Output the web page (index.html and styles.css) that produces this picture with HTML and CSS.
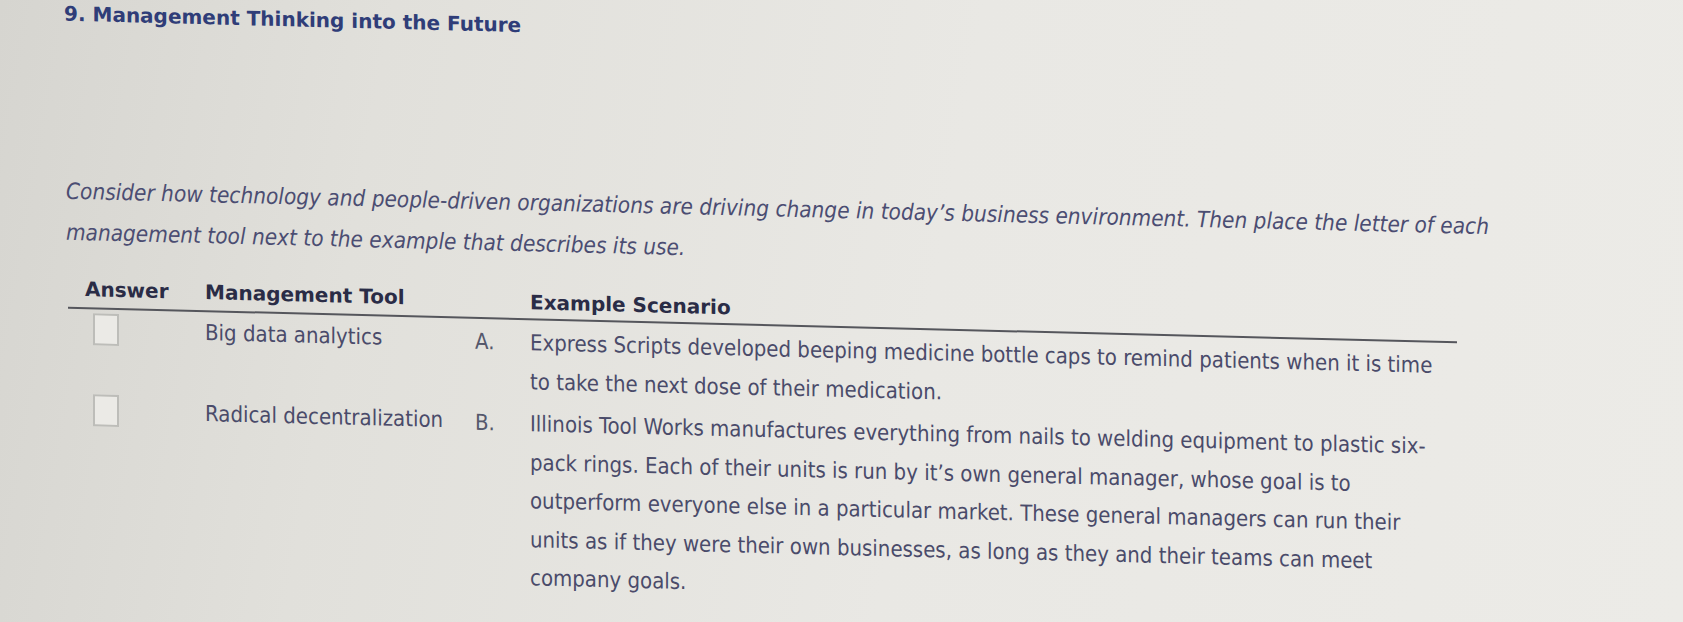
FILE: index.html
```html
<!DOCTYPE html>
<html lang="en">
<head>
<meta charset="utf-8">
<title>Management Thinking into the Future</title>
<link rel="stylesheet" href="styles.css">
</head>
<body>
<div class="page">
  <h1 class="title">9. Management Thinking into the Future</h1>
  <p class="prompt">Consider how technology and people-driven organizations are driving change in today’s business environment. Then place the letter of each management tool next to the example that describes its use.</p>
  <div class="match">
    <div class="head">
      <div class="c-answer">Answer</div>
      <div class="c-tool">Management Tool</div>
      <div class="c-letter"></div>
      <div class="c-scenario">Example Scenario</div>
    </div>
    <div class="rows">
      <div class="row">
        <div class="c-answer"><span class="box"></span></div>
        <div class="c-tool">Big data analytics</div>
        <div class="c-letter">A.</div>
        <div class="c-scenario">Express Scripts developed beeping medicine bottle caps to remind patients when it is time to take the next dose of their medication.</div>
      </div>
      <div class="row">
        <div class="c-answer"><span class="box"></span></div>
        <div class="c-tool">Radical decentralization</div>
        <div class="c-letter">B.</div>
        <div class="c-scenario">Illinois Tool Works manufactures everything from nails to welding equipment to plastic six-pack rings. Each of their units is run by it’s own general manager, whose goal is to outperform everyone else in a particular market. These general managers can run their units as if they were their own businesses, as long as they and their teams can meet company goals.</div>
      </div>
    </div>
  </div>
</div>
</body>
</html>
```

FILE: styles.css
```css
html, body {
  margin: 0;
  height: 100%;
}

body {
  background: linear-gradient(100deg, #d6d5d0 0%, #e1e0db 22%, #e9e8e4 55%, #ecebe7 100%);
  overflow: hidden;
  font-family: "DejaVu Sans", "Liberation Sans", sans-serif;
}

.page {
  transform: skewY(1.43deg);
  transform-origin: 0 0;
  padding: 0;
}

.title {
  margin: 1px 0 0 64px;
  font-size: 20px;
  line-height: 22px;
  font-weight: bold;
  color: #2f3d78;
}

.prompt {
  margin: 146px 0 0 66px;
  width: 1440px;
  font-family: "DejaVu Sans Condensed", "DejaVu Sans", sans-serif;
  font-stretch: condensed;
  font-style: italic;
  font-size: 22.4px;
  line-height: 41px;
  color: #4b4d72;
}

.match {
  margin: 21px 0 0 68px;
  width: 1389px;
}

.head, .row {
  display: grid;
  grid-template-columns: 137px 270px 55px 1fr;
}

.head {
  font-weight: bold;
  font-size: 20px;
  line-height: 30px;
  color: #2a2c46;
  padding-bottom: 1px;
  border-bottom: 2px solid #55565c;
}

.head .c-answer {
  padding-left: 17px;
}

.head .c-scenario {
  padding-top: 2px;
}

.rows {
  padding-top: 4px;
  display: flex;
  flex-direction: column;
  gap: 4px;
}

.row {
  font-family: "DejaVu Sans Condensed", "DejaVu Sans", sans-serif;
  font-stretch: condensed;
  font-size: 22px;
  line-height: 38.5px;
  color: #4a4b6a;
}

.row .c-answer {
  padding-left: 25px;
}

.row .c-tool {
  margin-top: -2px;
}

.row .c-letter {
  color: #55586c;
}

.row .c-scenario {
  padding-right: 11px;
}

.box {
  display: block;
  width: 26px;
  height: 32px;
  box-sizing: border-box;
  border: 2px solid #bdbdb9;
  background: #ebeae6;
}
```
